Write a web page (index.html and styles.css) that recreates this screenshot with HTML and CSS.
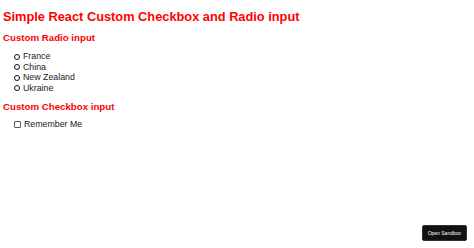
FILE: index.html
```html
<!DOCTYPE html>
<html>
<head>
  <title>Simple React Custom Checkbox and Radio input</title>
  <link rel="stylesheet" href="styles.css">
</head>
<body>
  <h1>Simple React Custom Checkbox and Radio input</h1>

  <h2>Custom Radio input</h2>
  <div class="options">
    <label class="option"><span class="radio"></span>France</label>
    <label class="option"><span class="radio"></span>China</label>
    <label class="option"><span class="radio"></span>New Zealand</label>
    <label class="option"><span class="radio"></span>Ukraine</label>
  </div>

  <h2 class="second">Custom Checkbox input</h2>
  <div class="options">
    <label class="option"><span class="checkbox"></span>Remember Me</label>
  </div>

  <button class="sandbox">Open Sandbox</button>
</body>
</html>
```

FILE: styles.css
```css
body {
  font-family: "Liberation Sans", Arial, sans-serif;
  margin: 4px 3px;
  color: #222;
}
h1 {
  color: red;
  font-size: 12.8px;
  margin: 5px 0 8px;
}
h2 {
  color: red;
  font-size: 9.7px;
  margin: 0 0 8.4px;
}
h2.second {
  margin: 8px 0 7px;
}
.options {
  padding-left: 11px;
}
.option {
  display: flex;
  align-items: center;
  gap: 3px;
  font-size: 8.8px;
  line-height: 10.5px;
}
.radio {
  width: 4px;
  height: 4px;
  border: 1.7px solid #111;
  border-radius: 50%;
}
.checkbox {
  width: 5px;
  height: 5px;
  border: 1px solid #555;
  border-radius: 1px;
}
.sandbox {
  position: fixed;
  right: 7px;
  bottom: 7px;
  background: #111;
  color: #fff;
  border: 1px solid #333;
  border-radius: 2px;
  font-family: "Liberation Sans", Arial, sans-serif;
  font-size: 5px;
  padding: 4px 5px;
}
```
